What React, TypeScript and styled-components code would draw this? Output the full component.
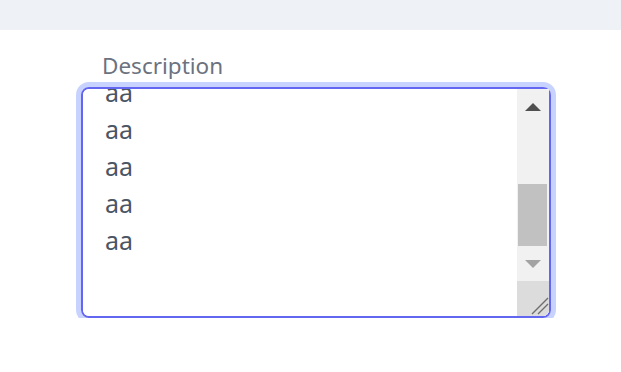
import { useLayoutEffect, useRef, useState } from "react";
import styled, { createGlobalStyle } from "styled-components";

const GlobalStyle = createGlobalStyle`
	html, body {
		margin: 0;
		padding: 0;
		background: #ffffff;
		font-family: "Noto Sans", "Open Sans", sans-serif;
	}
`;

const TopBar = styled.div`
	height: 30px;
	background: #eef2f7;
`;

const Form = styled.div`
	padding: 21px 0 0 81px;
`;

const Field = styled.div`
	display: flex;
	flex-direction: column;
	gap: 6px;
	width: 470px;
`;

const Label = styled.label`
	padding-left: 21px;
	font-size: 22.5px;
	line-height: 30px;
	color: #6b7280;
`;

const Box = styled.div`
	position: relative;
	width: 470px;
	height: 231px;
	border-radius: 8px;
	box-shadow: 0 0 0 5px #c7d2fe;
`;

const TextArea = styled.textarea`
	display: block;
	box-sizing: border-box;
	width: 100%;
	height: 100%;
	margin: 0;
	padding: 20px 52px 20px 22px;
	border: 2px solid #6366f1;
	border-radius: 8px;
	outline: none;
	font-family: "Noto Sans", "Open Sans", sans-serif;
	font-size: 25px;
	line-height: 37px;
	color: #4b5563;
	background: #ffffff;
	resize: none;
	overflow-y: scroll;
	scrollbar-width: none;
`;

const ScrollBar = styled.div`
	position: absolute;
	top: 2px;
	right: 2px;
	bottom: 2px;
	width: 32px;
	display: flex;
	flex-direction: column;
	background: #f1f1f1;
	border-bottom-right-radius: 6px;
	overflow: hidden;
`;

const ArrowButton = styled.div`
	height: 35px;
	flex: none;
	display: flex;
	align-items: center;
	justify-content: center;
`;

const Track = styled.div`
	flex: 1;
	position: relative;
`;

const Thumb = styled.div`
	position: absolute;
	left: 1px;
	right: 2px;
	background: #c1c1c1;
`;

const Corner = styled.div`
	height: 35px;
	flex: none;
	background: #dcdcdc;
`;

function Arrow({ up, color }: { up?: boolean; color: string }) {
	return (
		<svg width="16" height="8" viewBox="0 0 16 8">
			<path d={up ? "M0 8 L8 0 L16 8 Z" : "M0 0 L8 8 L16 0 Z"} fill={color} />
		</svg>
	);
}

export default function App() {
	const ref = useRef<HTMLTextAreaElement>(null);
	const [thumb, setThumb] = useState({ top: 61, height: 62 });

	const update = () => {
		const el = ref.current;
		if (!el) return;
		const track = el.clientHeight - 35 * 3;
		const height = Math.max(20, (track * el.clientHeight) / el.scrollHeight);
		const max = el.scrollHeight - el.clientHeight;
		const top = max > 0 ? ((track - height) * el.scrollTop) / max : 0;
		setThumb({ top, height });
	};

	useLayoutEffect(() => {
		if (ref.current) ref.current.scrollTop = ref.current.scrollHeight;
		update();
	}, []);

	return (
		<>
			<GlobalStyle />
			<TopBar />
			<Form>
				<Field>
					<Label htmlFor="description">Description</Label>
					<Box>
						<TextArea
							id="description"
							ref={ref}
							onScroll={update}
							defaultValue={"aa\n".repeat(10)}
						/>
						<ScrollBar>
							<ArrowButton>
								<Arrow up color="#505050" />
							</ArrowButton>
							<Track>
								<Thumb style={{ top: thumb.top, height: thumb.height }} />
							</Track>
							<ArrowButton>
								<Arrow color="#a3a3a3" />
							</ArrowButton>
							<Corner>
								<svg width="32" height="35" viewBox="0 0 32 35">
									<path
										d="M15 33 L31 17 M21 33 L31 23"
										stroke="#6e6e6e"
										strokeWidth="1.4"
										fill="none"
									/>
								</svg>
							</Corner>
						</ScrollBar>
					</Box>
				</Field>
			</Form>
		</>
	);
}
